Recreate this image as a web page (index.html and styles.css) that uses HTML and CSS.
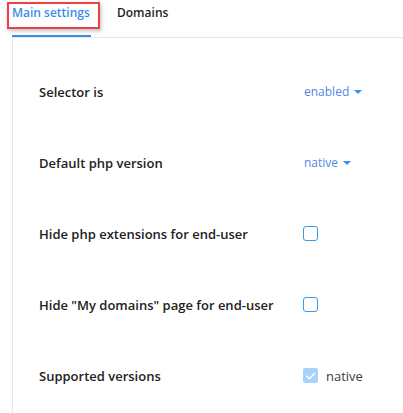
FILE: index.html
```html
<!DOCTYPE html>
<html>
<head>
<meta charset="utf-8">
<link rel="stylesheet" href="styles.css">
</head>
<body>
<div class="page">
  <nav class="tabs">
    <div class="tab active">Main settings<span class="highlight"></span></div>
    <div class="tab">Domains</div>
  </nav>
  <section class="panel">
    <div class="row">
      <div class="label">Selector is</div>
      <div class="control"><span class="dropdown">enabled<span class="caret"></span></span></div>
    </div>
    <div class="row">
      <div class="label">Default php version</div>
      <div class="control"><span class="dropdown">native<span class="caret"></span></span></div>
    </div>
    <div class="row">
      <div class="label">Hide php extensions for end-user</div>
      <div class="control"><span class="checkbox"></span></div>
    </div>
    <div class="row">
      <div class="label">Hide "My domains" page for end-user</div>
      <div class="control"><span class="checkbox"></span></div>
    </div>
    <div class="row">
      <div class="label">Supported versions</div>
      <div class="control">
        <span class="checkbox checked disabled"><svg viewBox="0 0 16 16" width="16" height="16"><path d="M4 8.3 L6.8 11 L12 5.5" fill="none" stroke="#fff" stroke-width="1.6" stroke-linecap="round" stroke-linejoin="round"/></svg></span>
        <span class="option">native</span>
      </div>
    </div>
  </section>
</div>
</body>
</html>
```

FILE: styles.css
```css
html, body {
  margin: 0;
  padding: 0;
  background: #fff;
  height: 100%;
  overflow: hidden;
}
body {
  font-family: "Open Sans", "Noto Sans", sans-serif;
  color: #222;
}
.page {
  padding-left: 12px;
  height: 100%;
  display: flex;
  flex-direction: column;
}
.tabs {
  display: flex;
  border-bottom: 1px solid #e6e6e6;
  height: 38px;
  box-sizing: border-box;
  padding-top: 4px;
  flex: none;
}
.tab {
  position: relative;
  font-size: 12px;
  font-weight: 600;
  line-height: 18px;
  color: #1f1f1f;
  height: 33px;
  box-sizing: border-box;
  white-space: nowrap;
}
.tab.active {
  color: #3a8ee6;
  border-bottom: 2px solid #3a8ee6;
  width: 79px;
  margin-right: 26px;
}
.highlight {
  position: absolute;
  left: -5px;
  top: -2px;
  width: 93px;
  height: 27px;
  border: 2px solid #ee3f47;
  box-sizing: border-box;
  box-shadow: 1px 2px 4px rgba(0,0,0,0.25);
}
.panel {
  flex: 1;
  border-left: 1px solid #e6e6e6;
  padding-top: 18px;
  padding-left: 26px;
}
.row {
  display: grid;
  grid-template-columns: 264px auto;
  align-items: center;
  height: 71px;
}
.label {
  font-size: 13px;
  font-weight: 600;
  color: #222;
}
.control {
  display: flex;
  align-items: center;
  gap: 8px;
}
.dropdown {
  display: inline-flex;
  align-items: center;
  font-size: 12px;
  color: #4f87e6;
  padding-left: 1px;
}
.caret {
  display: inline-block;
  width: 0;
  height: 0;
  margin-left: 5px;
  margin-top: 1px;
  border-left: 4px solid transparent;
  border-right: 4px solid transparent;
  border-top: 4px solid #3a8ee6;
}
.checkbox {
  display: inline-flex;
  align-items: center;
  justify-content: center;
  width: 15px;
  height: 15px;
  box-sizing: border-box;
  border: 1.5px solid #3b99f0;
  border-radius: 3px;
}
.checkbox.checked.disabled {
  background: #a8d4fb;
  border: none;
  border-radius: 2px;
}
.option {
  font-size: 13px;
  color: #3d3d3d;
}
```
